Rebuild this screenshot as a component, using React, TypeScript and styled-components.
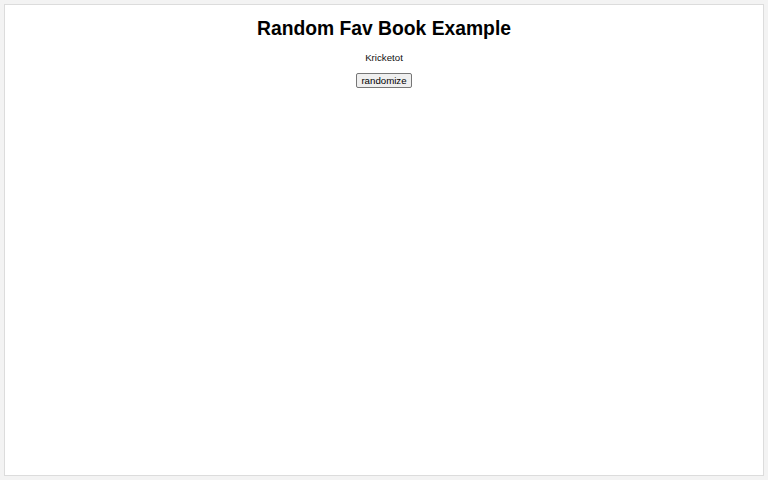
import { useState } from "react";
import { styled, createGlobalStyle } from "styled-components";

const GlobalStyle = createGlobalStyle`
html, body {
  margin: 0;
  padding: 0;
  height: 100%;
  background: #f3f3f3;
  font-family: "Liberation Sans", Arial, sans-serif;
}
#root {
  height: 100%;
}
`;

const Page = styled.div`
height: 100%;
box-sizing: border-box;
padding: 4px 4px 4px 4px;
display: flex;
`;

const Card = styled.main`
flex: 1;
background: #fff;
border: 1px solid #dcdcdc;
display: flex;
flex-direction: column;
align-items: center;
padding-top: 12px;
`;

const Title = styled.h1`
font-size: 19.3px;
font-weight: bold;
color: #000;
margin: 0;
line-height: 23px;
`;

const BookName = styled.p`
font-size: 9.7px;
color: #111;
margin: 12px 0 0;
line-height: 12px;
`;

const Button = styled.button`
margin-top: 9px;
font-family: "Liberation Sans", Arial, sans-serif;
font-size: 9.7px;
color: #000;
background: #efefef;
border: 1px solid #767676;
border-radius: 2px;
padding: 1px 4px;
line-height: 11px;
`;

const books = ["Kricketot", "Bidoof", "Starly", "Shinx", "Piplup"];

function App() {
  const [book, setBook] = useState(books[0]);
  return (
    <>
      <GlobalStyle />
      <Page>
        <Card>
          <Title>Random Fav Book Example</Title>
          <BookName>{book}</BookName>
          <Button onClick={() => setBook(books[Math.floor(Math.random() * books.length)])}>
            randomize
          </Button>
        </Card>
      </Page>
    </>
  );
}

export default App;
